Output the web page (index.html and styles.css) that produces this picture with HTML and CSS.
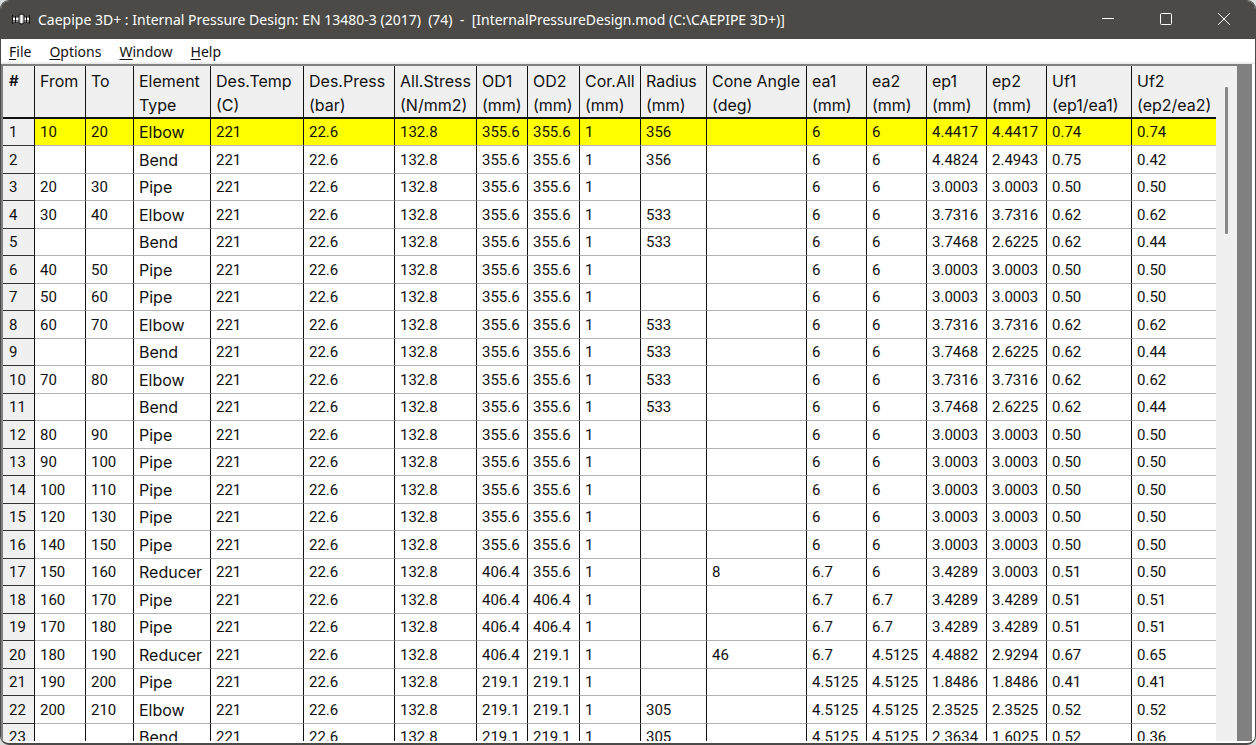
FILE: index.html
```
<!DOCTYPE html>
<html lang="en">
  <head>
    <meta charset="UTF-8" />
    <title>Caepipe 3D+ : Internal Pressure Design</title>
    <link rel="stylesheet" href="styles.css">
  </head>
  <body>
    <div class="window">
      <!-- Title bar -->
      <header class="titlebar">
        <svg class="app-icon" width="20" height="14" viewBox="0 0 20 14">
          <path d="M1 5h18v5H1z" fill="#8a8a8a" />
          <path d="M2 6h16v2H2z" fill="#f4f4f4" />
          <path d="M1.500 3v9M4.500 4v7M15.500 4v7M18.500 3v9" stroke="#111" />
          <path d="M8 3l2-1h1l2 1v8l-2 1h-1l-2-1z" fill="#ccc" stroke="#111" />
          <path d="M10.500 3v8" stroke="#fff" />
        </svg>
        <span class="caption">Caepipe 3D+ : Internal Pressure Design: EN 13480-3 (2017)&nbsp; (74)&nbsp; -&nbsp; [InternalPressureDesign.mod (C:\CAEPIPE 3D+)]</span>
        <div class="window-buttons">
          <button aria-label="Minimize"><svg width="12" height="12"><path d="M0 5.500h12" /></svg></button>
          <button aria-label="Maximize"><svg width="12" height="12"><rect x="0.500" y="0.500" width="11" height="11" rx="1" /></svg></button>
          <button aria-label="Close"><svg width="12" height="12"><path d="M0 0l12 12M12 0L0 12" /></svg></button>
        </div>
      </header>

      <!-- Menu -->
      <nav class="menu">
        <button><u>F</u>ile</button>
        <button><u>O</u>ptions</button>
        <button><u>W</u>indow</button>
        <button><u>H</u>elp</button>
      </nav>

      <!-- Results -->
      <main class="client">
        <div class="sheet">
          <table class="grid">
            <colgroup id="cols"></colgroup>
            <thead><tr id="head"></tr></thead>
            <tbody id="rows"></tbody>
          </table>
        </div>
        <div class="scrollbar"><div class="thumb"></div></div>
      </main>
    </div>
    <script src="script.js"></script>
  </body>
</html>
```
FILE: styles.css
```
* {
  box-sizing: border-box;
}

body {
  margin: 0;
  background-color: #d8dcda;
  font-family: "Noto Sans", "Open Sans", sans-serif;
  color: #111;
}

button {
  font: inherit;
  color: inherit;
  background: none;
  border: 0;
  padding: 0;
}

.window {
  display: flex;
  flex-direction: column;
  height: 100vh;
  border: 1px solid #4b4a47;
  border-bottom-width: 2px;
  border-radius: 9px;
  overflow: hidden;
  background-color: #fff;
}

/* Title bar */
.titlebar {
  display: flex;
  align-items: center;
  flex: none;
  height: 38px;
  padding: 0 2px 2px 10px;
  background-color: #4b4a47;
  color: #fff;
  font-size: 14px;
}

.app-icon {
  margin-right: 7px;
}

.caption {
  flex: 1;
  white-space: nowrap;
}

.window-buttons {
  display: flex;
}

.window-buttons button {
  display: flex;
  align-items: center;
  justify-content: center;
  width: 58px;
  height: 36px;
}

.window-buttons svg {
  fill: none;
  stroke: #fff;
  overflow: visible;
}

/* Menu */
.menu {
  display: flex;
  flex: none;
  gap: 18px;
  height: 25px;
  padding-left: 8px;
  background: linear-gradient(#fff 22px, #e4e4e4);
  font-size: 14px;
  line-height: 24px;
}

.menu u {
  text-underline-offset: 2px;
}

/* Results */
.client {
  display: flex;
  flex: 1;
  min-height: 0;
  margin: 0 3px 2px 0;
  border-top: 2px solid #808080;
  border-left: 2px solid #808080;
  border-right: 15px solid #808080;
}

.sheet {
  flex: 1;
  min-width: 0;
  overflow: hidden;
}

.grid {
  width: 100%;
  table-layout: fixed;
  border-collapse: separate;
  border-spacing: 0;
}

.grid th,
.grid td {
  padding: 0 0 0 5px;
  border-right: 1px solid #111;
  text-align: left;
  font-weight: 400;
  white-space: nowrap;
}

.grid th:first-child {
  padding-left: 6px;
}

.grid th:last-child,
.grid td:last-child {
  border-right: 0;
}

.grid thead th {
  height: 53px;
  padding-top: 3px;
  border-bottom: 2px solid #111;
  background-color: #f0f0f0;
  font-family: Inter, sans-serif;
  font-size: 16px;
  line-height: 24px;
  vertical-align: top;
}

.grid thead th:first-child {
  font-size: 15px;
  font-weight: 600;
}

.grid tbody tr {
  height: 27px;
}

.grid tbody tr:nth-child(even) {
  height: 28px;
}

.grid td,
.grid tbody th {
  border-bottom: 1px solid #b4b4b4;
  font-family: Roboto, sans-serif;
  font-size: 15px;
  line-height: 24px;
}

.grid tbody th {
  border-bottom-color: #333;
  background-color: #f0f0f0;
}

.grid .element {
  font-family: Inter, sans-serif;
  font-size: 16px;
}

.grid .selected td {
  background-color: #ff0;
}

.scrollbar {
  flex: none;
  width: 21px;
  padding: 21px 9px 0 9px;
  background-color: #f0f0f0;
}

.thumb {
  height: 147px;
  border-radius: 1px;
  background-color: #888;
}
```
FILE: script.js
```
const columns = [
  ["#", "", 32],
  ["From", "", 51],
  ["To", "", 48],
  ["Element", "Type", 77],
  ["Des.Temp", "(C)", 93],
  ["Des.Press", "(bar)", 91],
  ["All.Stress", "(N/mm2)", 82],
  ["OD1", "(mm)", 51],
  ["OD2", "(mm)", 52],
  ["Cor.All", "(mm)", 61],
  ["Radius", "(mm)", 66],
  ["Cone Angle", "(deg)", 100],
  ["ea1", "(mm)", 60],
  ["ea2", "(mm)", 60],
  ["ep1", "(mm)", 60],
  ["ep2", "(mm)", 60],
  ["Uf1", "(ep1/ea1)", 85],
  ["Uf2", "(ep2/ea2)", 84],
];

// Design conditions are the same for every element
const temp = "221";
const press = "22.6";
const stress = "132.8";
const corrosion = "1";

// from, to, type, OD1, OD2, radius, cone angle, ea1, ea2, ep1, ep2, Uf1, Uf2
const data = `10,20,Elbow,355.6,355.6,356,,6,6,4.4417,4.4417,0.74,0.74
,,Bend,355.6,355.6,356,,6,6,4.4824,2.4943,0.75,0.42
20,30,Pipe,355.6,355.6,,,6,6,3.0003,3.0003,0.50,0.50
30,40,Elbow,355.6,355.6,533,,6,6,3.7316,3.7316,0.62,0.62
,,Bend,355.6,355.6,533,,6,6,3.7468,2.6225,0.62,0.44
40,50,Pipe,355.6,355.6,,,6,6,3.0003,3.0003,0.50,0.50
50,60,Pipe,355.6,355.6,,,6,6,3.0003,3.0003,0.50,0.50
60,70,Elbow,355.6,355.6,533,,6,6,3.7316,3.7316,0.62,0.62
,,Bend,355.6,355.6,533,,6,6,3.7468,2.6225,0.62,0.44
70,80,Elbow,355.6,355.6,533,,6,6,3.7316,3.7316,0.62,0.62
,,Bend,355.6,355.6,533,,6,6,3.7468,2.6225,0.62,0.44
80,90,Pipe,355.6,355.6,,,6,6,3.0003,3.0003,0.50,0.50
90,100,Pipe,355.6,355.6,,,6,6,3.0003,3.0003,0.50,0.50
100,110,Pipe,355.6,355.6,,,6,6,3.0003,3.0003,0.50,0.50
120,130,Pipe,355.6,355.6,,,6,6,3.0003,3.0003,0.50,0.50
140,150,Pipe,355.6,355.6,,,6,6,3.0003,3.0003,0.50,0.50
150,160,Reducer,406.4,355.6,,8,6.7,6,3.4289,3.0003,0.51,0.50
160,170,Pipe,406.4,406.4,,,6.7,6.7,3.4289,3.4289,0.51,0.51
170,180,Pipe,406.4,406.4,,,6.7,6.7,3.4289,3.4289,0.51,0.51
180,190,Reducer,406.4,219.1,,46,6.7,4.5125,4.4882,2.9294,0.67,0.65
190,200,Pipe,219.1,219.1,,,4.5125,4.5125,1.8486,1.8486,0.41,0.41
200,210,Elbow,219.1,219.1,305,,4.5125,4.5125,2.3525,2.3525,0.52,0.52
,,Bend,219.1,219.1,305,,4.5125,4.5125,2.3634,1.6025,0.52,0.36`;

document.getElementById("cols").innerHTML = columns
  .map((c) => `<col style="width: ${c[2]}px">`)
  .join("");

document.getElementById("head").innerHTML = columns
  .map((c) => `<th scope="col">${c[0]}<br>${c[1]}</th>`)
  .join("");

document.getElementById("rows").innerHTML = data
  .split("\n")
  .map((line, i) => {
    const [from, to, type, od1, od2, ...rest] = line.split(",");
    const before = [from, to].map((v) => `<td>${v}</td>`).join("");
    const after = [temp, press, stress, od1, od2, corrosion, ...rest]
      .map((v) => `<td>${v}</td>`)
      .join("");
    return `<tr class="${i === 0 ? "selected" : ""}"><th scope="row">${i + 1}</th>${before}<td class="element">${type}</td>${after}</tr>`;
  })
  .join("");
```
